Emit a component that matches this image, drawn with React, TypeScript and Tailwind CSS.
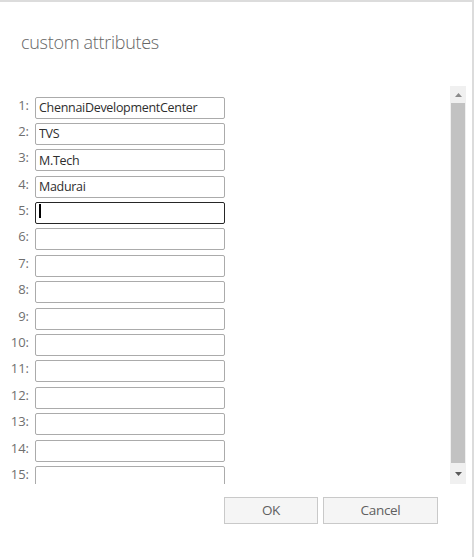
const values = ["ChennaiDevelopmentCenter", "TVS", "M.Tech", "Madurai", "", "", "", "", "", "", "", "", "", "", ""];

function AttributeRow({ index, value, focused }: { index: number; value: string; focused?: boolean }) {
  return (
    <div className="flex h-[22px] flex-none items-center">
      <span className="w-[30px] flex-none pr-[1px] text-right text-[13px] leading-none text-[#6f6f6f]">{index}:</span>
      <div className="relative ml-[5px] h-[22px] w-[190px] flex-none">
        <input
          readOnly
          value={value}
          className={`h-full w-full rounded-[2px] bg-white px-[3px] text-[12.5px] tracking-[-0.3px] text-[#2e2e2e] outline-none ${
            focused ? "border-[1.5px] border-[#262626]" : "border border-[#ababab]"
          }`}
        />
        {focused && <span className="absolute left-[4px] top-[4px] h-[14px] w-[1.5px] bg-black" />}
      </div>
    </div>
  );
}

export default function App() {
  return (
    <div className="flex h-[557px] w-[474px] flex-col overflow-hidden border-r-2 border-t-2 border-[#dcdcdc] bg-white font-['Open_Sans',sans-serif]">
      {/* ── Title ── */}
      <div className="ml-[21px] mt-[27px] text-[18px] font-light leading-[26px] tracking-[-0.3px] text-[#666]">
        custom attributes
      </div>

      {/* ── Scrolling list ── */}
      <div className="mr-[6px] mt-[31px] flex h-[398px] flex-none">
        <div className="flex min-w-0 flex-1 flex-col gap-[4.4px] overflow-hidden pt-[8px]">
          {values.map((v, i) => (
            <AttributeRow key={i} index={i + 1} value={v} focused={i === 4} />
          ))}
        </div>

        {/* scrollbar */}
        <div className="flex w-[16px] flex-none flex-col bg-[#f0f0f0]">
          <div className="flex h-[17px] flex-none items-center justify-center">
            <svg width="7" height="4" viewBox="0 0 7 4">
              <path d="M0 4 L3.5 0 L7 4 Z" fill="#8a8a8a" />
            </svg>
          </div>
          <div className="mx-[1px] flex-1 bg-[#c2c2c2]" />
          <div className="flex h-[21px] flex-none items-center justify-center">
            <svg width="7" height="4" viewBox="0 0 7 4">
              <path d="M0 0 L3.5 4 L7 0 Z" fill="#5a5a5a" />
            </svg>
          </div>
        </div>
      </div>

      {/* ── Buttons ── */}
      <div className="mt-[13px] flex justify-end gap-[5px] pr-[34px]">
        <button className="h-[27px] w-[94px] border border-[#c9c9c9] bg-[#f5f5f5] text-[13.5px] tracking-[-0.3px] text-[#606060]">
          OK
        </button>
        <button className="h-[27px] w-[115px] border border-[#c9c9c9] bg-[#f5f5f5] text-[13.5px] tracking-[-0.3px] text-[#606060]">
          Cancel
        </button>
      </div>
    </div>
  );
}
